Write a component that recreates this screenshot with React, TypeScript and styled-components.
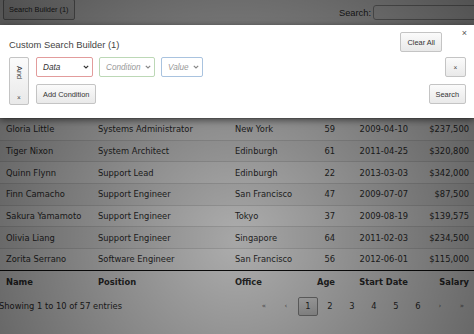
import React from "react";
import styled, { createGlobalStyle } from "styled-components";

const GlobalStyle = createGlobalStyle`
  html, body { margin: 0; padding: 0; background: #fff; overflow: hidden; }
  * { box-sizing: border-box; }
`;

const Page = styled.div`
  position: relative;
  width: 474px;
  height: 334px;
  overflow: hidden;
  background: #fff;
  font-family: "DejaVu Sans", Verdana, sans-serif;
  font-size: 8.33px;
  color: #333;
`;

const Toolbar = styled.div`
  height: 22px;
  display: flex;
  align-items: flex-start;
  justify-content: space-between;
  padding-left: 3px;
`;

const Btn = styled.div<{ $h?: number }>`
  display: inline-flex;
  align-items: center;
  justify-content: center;
  height: ${(p) => p.$h ?? 20}px;
  padding: 0 6px;
  border: 1px solid #c4c4c4;
  border-radius: 2px;
  background: linear-gradient(to bottom, #fbfbfb 0%, #e9e9e9 100%);
  font-family: "Liberation Sans", Arial, sans-serif;
  font-size: 7.4px;
  color: #333;
  white-space: nowrap;
`;

const TopButton = styled(Btn)`
  margin-top: -1px;
  height: 21px;
  padding: 0 5px;
  border-color: #999;
`;

const SearchArea = styled.div`
  display: flex;
  align-items: center;
  gap: 2px;
  margin-top: 5px;
  font-family: "Liberation Sans", Arial, sans-serif;
  font-size: 9.3px;
  color: #333;
`;

const SearchInput = styled.div`
  width: 104px;
  height: 15px;
  margin-right: -3px;
  border: 1px solid #aaa;
  border-radius: 3px;
  background: #fff;
`;

const COLS = "92px 137px 71px 41px 73px 61px";

const HeadRow = styled.div`
  display: grid;
  grid-template-columns: ${COLS};
  height: 31px;
  align-items: center;
  font-weight: bold;
  border-bottom: 1px solid #111;
`;

const Row = styled.div<{ $odd?: boolean }>`
  display: grid;
  grid-template-columns: ${COLS};
  height: 21.67px;
  align-items: center;
  border-top: 1px solid #ddd;
  background: ${(p) => (p.$odd ? "#f6f6f6" : "#fff")};
`;

const FootRow = styled.div`
  display: grid;
  grid-template-columns: ${COLS};
  height: 23px;
  align-items: center;
  font-weight: bold;
  border-top: 1px solid #111;
`;

const Cell = styled.div<{ $right?: boolean }>`
  padding: 0 6px;
  white-space: nowrap;
  text-align: ${(p) => (p.$right ? "right" : "left")};
`;

const Footer = styled.div`
  display: flex;
  align-items: center;
  justify-content: space-between;
  padding-top: 4px;
  padding-right: 2px;
`;

const Info = styled.div`
  margin-left: -1px;
`;

const Pager = styled.div`
  display: flex;
  gap: 2px;
`;

const PageBtn = styled.div<{ $current?: boolean; $muted?: boolean }>`
  width: 20px;
  height: 19px;
  display: flex;
  align-items: center;
  justify-content: center;
  border-radius: 2px;
  border: 1px solid ${(p) => (p.$current ? "#979797" : "transparent")};
  background: ${(p) =>
    p.$current ? "linear-gradient(to bottom, #fff 0%, #dcdcdc 100%)" : "transparent"};
  color: ${(p) => (p.$muted ? "#777" : "#333")};
  font-size: ${(p) => (p.$muted ? "7px" : "8.33px")};
`;

const Overlay = styled.div`
  position: absolute;
  inset: 0;
  z-index: 2;
  background: radial-gradient(
    ellipse farthest-corner at 50% 72%,
    rgba(0, 0, 0, 0.32) 0%,
    rgba(0, 0, 0, 0.68) 100%
  );
`;

const Modal = styled.div`
  position: absolute;
  top: 25px;
  left: 0;
  width: 474px;
  height: 93px;
  z-index: 3;
  background: #fff;
  box-shadow: 0 2px 7px rgba(0, 0, 0, 0.55);
  padding: 7px 8px 0 9px;
  display: flex;
  flex-direction: column;
  gap: 5px;
  font-family: "Liberation Sans", Arial, sans-serif;
  color: #333;
`;

const CloseX = styled.div`
  position: absolute;
  top: 3px;
  right: 7px;
  font-size: 9px;
  color: #555;
`;

const TitleRow = styled.div`
  display: flex;
  align-items: flex-start;
  justify-content: space-between;
  padding-right: 24px;
`;

const Title = styled.div`
  padding-top: 7px;
  font-size: 9.4px;
  line-height: 12px;
  color: #444;
`;

const Group = styled.div`
  display: flex;
  gap: 7px;
`;

const Logic = styled(Btn)`
  width: 20px;
  height: 48px;
  padding: 8px 0 3px;
  flex-direction: column;
  justify-content: space-between;
`;

const LogicText = styled.span`
  writing-mode: vertical-rl;
  font-size: 7.4px;
`;

const SmallX = styled.span`
  font-size: 6.5px;
  color: #444;
`;

const Main = styled.div`
  flex: 1;
  display: flex;
  flex-direction: column;
  gap: 7px;
`;

const Line = styled.div`
  display: flex;
  align-items: center;
  gap: 6px;
`;

const TONES: Record<string, string> = {
  data: "#e29c9c",
  condition: "#bcd8b6",
  value: "#a9c3df",
};

const Select = styled.div<{ $tone: string; $w: number; $dim?: boolean }>`
  width: ${(p) => p.$w}px;
  height: 20px;
  display: flex;
  align-items: center;
  justify-content: space-between;
  padding: 0 3px 0 6px;
  border: 1px solid ${(p) => TONES[p.$tone]};
  border-radius: 2px;
  background: #fff;
  font-size: 8.2px;
  font-style: italic;
  color: ${(p) => (p.$dim ? "#999" : "#333")};
`;

const DelBtn = styled(Btn)`
  width: 21px;
  padding: 0;
  margin-left: auto;
`;

const PushRight = styled(Btn)`
  margin-left: auto;
`;

const Chevron = ({ dim }: { dim?: boolean }) => (
  <svg width="6" height="4" viewBox="0 0 6 4">
    <path d="M0.8 0.8 L3 3 L5.2 0.8" fill="none" stroke={dim ? "#888" : "#333"} strokeWidth="1.2" />
  </svg>
);

const hidden = [
  ["Airi Satou", "Accountant", "Tokyo", "33", "2008-11-28", "$162,700"],
  ["Ashton Cox", "Junior Technical Author", "San Francisco", "66", "2009-01-12", "$86,000"],
  ["Brielle Williamson", "Integration Specialist", "New York", "61", "2012-12-02", "$372,000"],
];

const rows = [
  ["Gloria Little", "Systems Administrator", "New York", "59", "2009-04-10", "$237,500"],
  ["Tiger Nixon", "System Architect", "Edinburgh", "61", "2011-04-25", "$320,800"],
  ["Quinn Flynn", "Support Lead", "Edinburgh", "22", "2013-03-03", "$342,000"],
  ["Finn Camacho", "Support Engineer", "San Francisco", "47", "2009-07-07", "$87,500"],
  ["Sakura Yamamoto", "Support Engineer", "Tokyo", "37", "2009-08-19", "$139,575"],
  ["Olivia Liang", "Support Engineer", "Singapore", "64", "2011-02-03", "$234,500"],
  ["Zorita Serrano", "Software Engineer", "San Francisco", "56", "2012-06-01", "$115,000"],
];

const headers = ["Name", "Position", "Office", "Age", "Start Date", "Salary"];
const isRight = (i: number) => i >= 3;

export default function App() {
  return (
    <>
      <GlobalStyle />
      <Page>
        <Toolbar>
          <TopButton>Search Builder (1)</TopButton>
          <SearchArea>
            Search:
            <SearchInput />
          </SearchArea>
        </Toolbar>

        <HeadRow>
          {headers.map((h, i) => (
            <Cell key={h} $right={isRight(i)}>{h}</Cell>
          ))}
        </HeadRow>
        {hidden.concat(rows).map((r, ri) => (
          <Row key={ri} $odd={ri % 2 === 0}>
            {r.map((c, i) => (
              <Cell key={i} $right={isRight(i)}>{c}</Cell>
            ))}
          </Row>
        ))}
        <FootRow>
          {headers.map((h, i) => (
            <Cell key={h} $right={isRight(i)}>{h}</Cell>
          ))}
        </FootRow>
        <Footer>
          <Info>Showing 1 to 10 of 57 entries</Info>
          <Pager>
            <PageBtn $muted>«</PageBtn>
            <PageBtn $muted>‹</PageBtn>
            <PageBtn $current>1</PageBtn>
            <PageBtn>2</PageBtn>
            <PageBtn>3</PageBtn>
            <PageBtn>4</PageBtn>
            <PageBtn>5</PageBtn>
            <PageBtn>6</PageBtn>
            <PageBtn $muted>›</PageBtn>
            <PageBtn $muted>»</PageBtn>
          </Pager>
        </Footer>

        <Overlay />

        <Modal>
          <CloseX>×</CloseX>
          <TitleRow>
            <Title>Custom Search Builder (1)</Title>
            <Btn>Clear All</Btn>
          </TitleRow>
          <Group>
            <Logic>
              <LogicText>And</LogicText>
              <SmallX>×</SmallX>
            </Logic>
            <Main>
              <Line>
                <Select $tone="data" $w={57}>
                  Data
                  <Chevron />
                </Select>
                <Select $tone="condition" $w={56} $dim>
                  Condition
                  <Chevron dim />
                </Select>
                <Select $tone="value" $w={42} $dim>
                  Value
                  <Chevron dim />
                </Select>
                <DelBtn>
                  <SmallX>×</SmallX>
                </DelBtn>
              </Line>
              <Line>
                <Btn>Add Condition</Btn>
                <PushRight>Search</PushRight>
              </Line>
            </Main>
          </Group>
        </Modal>
      </Page>
    </>
  );
}
